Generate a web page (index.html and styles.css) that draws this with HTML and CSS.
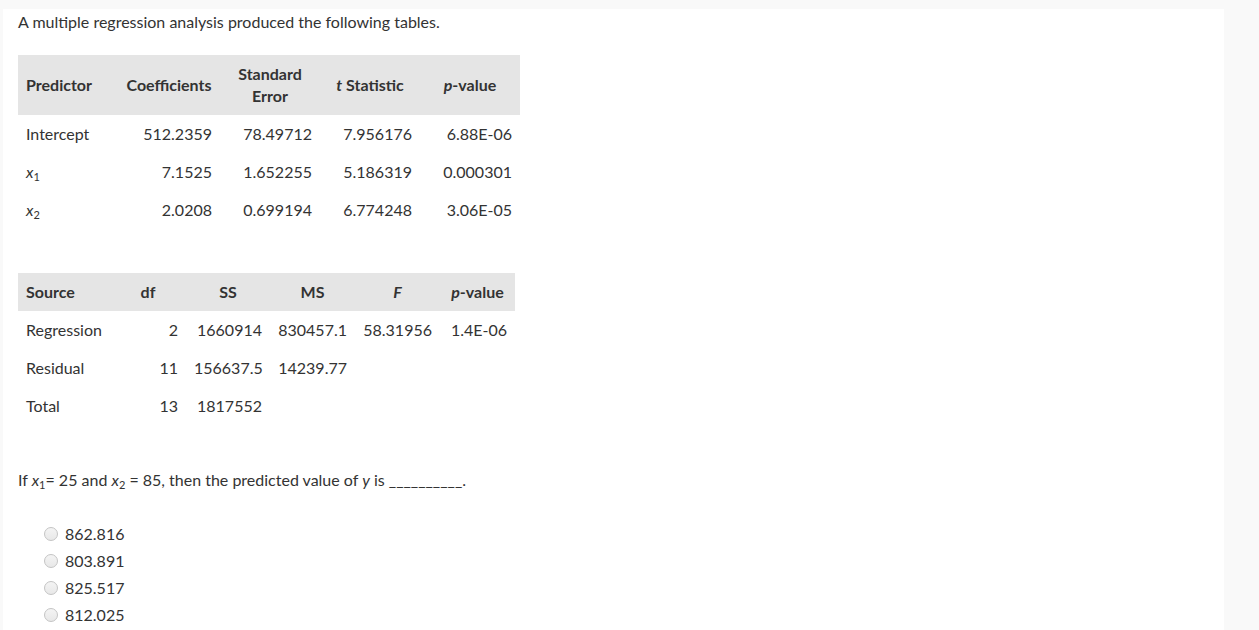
FILE: index.html
```html
<!DOCTYPE html>
<html lang="en">
<head>
  <meta charset="UTF-8">
  <title>Multiple Regression Question</title>
  <link rel="stylesheet" href="styles.css">
</head>
<body>

  <div class="panel">
    <p class="intro">A multiple regression analysis produced the following tables.</p>

    <table class="stats coef">
      <colgroup>
        <col class="w100"><col class="w102"><col class="w100"><col class="w100"><col class="w100">
      </colgroup>
      <tr>
        <th class="first">Predictor</th>
        <th>Coefficients</th>
        <th>Standard<br>Error</th>
        <th><i>t</i> Statistic</th>
        <th><i>p</i>-value</th>
      </tr>
      <tr>
        <td class="first">Intercept</td>
        <td>512.2359</td>
        <td>78.49712</td>
        <td>7.956176</td>
        <td>6.88E-06</td>
      </tr>
      <tr>
        <td class="first"><i>x</i><sub>1</sub></td>
        <td>7.1525</td>
        <td>1.652255</td>
        <td>5.186319</td>
        <td>0.000301</td>
      </tr>
      <tr>
        <td class="first"><i>x</i><sub>2</sub></td>
        <td>2.0208</td>
        <td>0.699194</td>
        <td>6.774248</td>
        <td>3.06E-05</td>
      </tr>
    </table>

    <table class="stats anova">
      <colgroup>
        <col class="w92"><col class="w76"><col class="w84"><col class="w85"><col class="w85"><col class="w75">
      </colgroup>
      <tr>
        <th class="first">Source</th>
        <th>df</th>
        <th>SS</th>
        <th>MS</th>
        <th><i>F</i></th>
        <th><i>p</i>-value</th>
      </tr>
      <tr>
        <td class="first">Regression</td>
        <td>2</td>
        <td>1660914</td>
        <td>830457.1</td>
        <td>58.31956</td>
        <td>1.4E-06</td>
      </tr>
      <tr>
        <td class="first">Residual</td>
        <td>11</td>
        <td>156637.5</td>
        <td>14239.77</td>
        <td></td>
        <td></td>
      </tr>
      <tr>
        <td class="first">Total</td>
        <td>13</td>
        <td>1817552</td>
        <td></td>
        <td></td>
        <td></td>
      </tr>
    </table>

    <p class="question">If <i>x</i><sub>1</sub>= 25 and <i>x</i><sub>2</sub> = 85, then the predicted value of <i>y</i> is __________.</p>

    <ul class="options">
      <li><span class="radio"></span>862.816</li>
      <li><span class="radio"></span>803.891</li>
      <li><span class="radio"></span>825.517</li>
      <li><span class="radio"></span>812.025</li>
    </ul>
  </div>

</body>
</html>
```

FILE: styles.css
```css
html, body {
  height: 100%;
}
body {
  margin: 0;
  background: #f9f9f9;
  font-family: Lato, "Open Sans", sans-serif;
  font-size: 16px;
  color: #333;
}
.panel {
  background: #fff;
  margin: 0 35px 0 3px;
  padding: 2px 15px 0 15px;
  position: relative;
  top: 9px;
  min-height: 621px;
  box-sizing: border-box;
}
.intro {
  margin: 0;
  line-height: 22px;
}
sub {
  font-size: 11px;
  line-height: 0;
  vertical-align: -3px;
}
.stats {
  border-collapse: collapse;
  table-layout: fixed;
  line-height: 22px;
}
.coef {
  margin-top: 22px;
  width: 502px;
}
.anova {
  margin-top: 44px;
  width: 497px;
}
.w100 { width: 100px; }
.w102 { width: 102px; }
.w92 { width: 92px; }
.w76 { width: 76px; }
.w84 { width: 84px; }
.w85 { width: 85px; }
.w75 { width: 75px; }
.stats th {
  background: #e5e5e5;
  padding: 8px;
  font-weight: bold;
  text-align: center;
  white-space: nowrap;
}
.stats td {
  padding: 8px;
  text-align: right;
  white-space: nowrap;
}
.stats .first {
  text-align: left;
}
.question {
  margin: 44px 0 0 0;
  line-height: 22px;
}
.options {
  list-style: none;
  margin: 29px 0 0 0;
  padding: 0 0 0 26px;
}
.options li {
  display: flex;
  align-items: center;
  height: 27px;
}
.radio {
  width: 12px;
  height: 12px;
  border: 1px solid #c4c4c4;
  border-radius: 50%;
  background: linear-gradient(#f4f4f4, #e8e8e8);
  margin-right: 7px;
}
```
